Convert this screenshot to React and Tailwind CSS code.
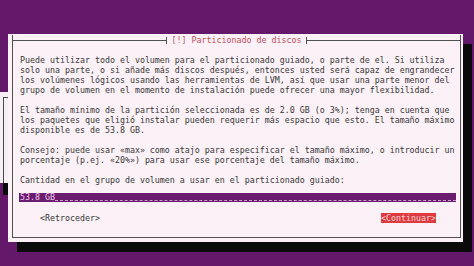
import React from "react"

const mono = { fontFamily: '"DejaVu Sans Mono", "Liberation Mono", monospace' }

const lines = [
  "Puede utilizar todo el volumen para el particionado guiado, o parte de el. Si utiliza",
  "solo una parte, o si añade más discos después, entonces usted será capaz de engrandecer",
  "los volúmenes lógicos usando las herramientas de LVM, así que usar una parte menor del",
  "grupo de volumen en el momento de instalación puede ofrecer una mayor flexibilidad.",
  "",
  "El tamaño mínimo de la partición seleccionada es de 2.0 GB (o 3%); tenga en cuenta que",
  "los paquetes que eligió instalar pueden requerir más espacio que esto. El tamaño máximo",
  "disponible es de 53.8 GB.",
  "",
  "Consejo: puede usar «max» como atajo para especificar el tamaño máximo, o introducir un",
  "porcentaje (p.ej. «20%») para usar ese porcentaje del tamaño máximo.",
  "",
  "Cantidad en el grupo de volumen a usar en el particionado guiado:",
]

export default function App() {
  return (
    <div
      className="relative w-[474px] h-[266px] overflow-hidden bg-[#63186a] pt-[34px] pl-[8px]"
      style={mono}
    >
      {/* window behind, peeking out on the left */}
      <div className="absolute left-0 top-[92px] w-[10px] h-[91px] bg-[#f7eef3] pl-[3px] pt-[5px]">
        <div className="h-full border-l border-t border-[#4a4a4a]" />
      </div>
      <div className="absolute left-[3px] top-[183px] w-[9px] h-[12px] bg-[#0a0a0a]" />

      {/* dialog */}
      <div className="relative w-[455px] h-[208px] bg-[#fbf1f6] shadow-[9px_10px_0_#0a0a0a] pt-[1px] pl-[4px] pr-[2px] pb-[4px] flex flex-col">
        <div className="flex-1 flex flex-col border-l border-r border-b border-[#505050]">
          {/* title row on top border */}
          <div className="h-[10px] flex items-center">
            <div className="flex-1 border-t border-[#505050]" />
            <div className="w-px h-[7px] bg-[#505050]" />
            <span className="px-[5px] text-[8.3px] leading-[10px] text-[#c24e5c] whitespace-pre">
              [!] Particionado de discos
            </span>
            <div className="w-px h-[7px] bg-[#505050]" />
            <div className="flex-1 border-t border-[#505050]" />
          </div>

          <div className="pt-[10px] pl-[7px] text-[8.3px] leading-[10px] text-[#383838]">
            {lines.map((l, i) => (
              <div key={i} className="h-[10px] whitespace-pre">
                {l}
              </div>
            ))}
          </div>

          {/* entry field */}
          <div className="mt-[8px] ml-[6px] mr-[4px] h-[9px] bg-[#6a1c6e] flex items-end text-[8.3px] leading-[9px]">
            <span className="text-[#f2c9ef] whitespace-pre pl-[1px]">53.8 GB</span>
            <div className="flex-1 mb-[1px] border-b border-dashed border-[#c99ac9]" />
          </div>

          {/* buttons */}
          <div className="mt-[11px] pl-[27px] pr-[24px] flex justify-between text-[8.3px] leading-[10px]">
            <span className="text-[#383838] whitespace-pre">&lt;Retroceder&gt;</span>
            <span className="bg-[#df3a3f] text-[#f8d6d6] whitespace-pre">&lt;Continuar&gt;</span>
          </div>
        </div>
      </div>
    </div>
  )
}
